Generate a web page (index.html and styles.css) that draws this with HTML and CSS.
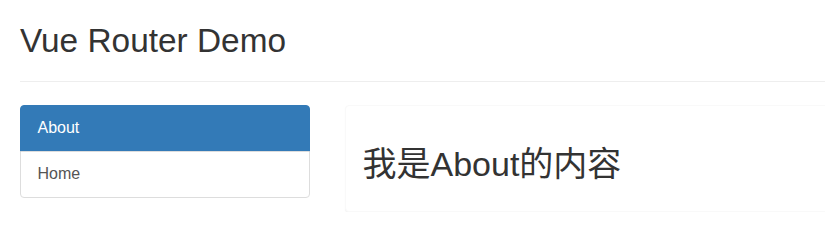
FILE: index.html
```html
<!DOCTYPE html>
<html lang="zh-CN">
<head>
<meta charset="utf-8">
<title>Vue Router Demo</title>
<link rel="stylesheet" href="styles.css">
</head>
<body>
<div class="page">
  <div class="page-header">
    <h2 class="title">Vue Router Demo</h2>
  </div>
  <div class="row">
    <div class="list-group">
      <a class="list-group-item active" href="#about">About</a>
      <a class="list-group-item" href="#home">Home</a>
    </div>
    <div class="panel">
      <div class="panel-body">
        <h2 class="content-title">我是About的内容</h2>
      </div>
    </div>
  </div>
</div>
</body>
</html>
```
FILE: styles.css
```css
html, body {
  margin: 0;
  padding: 0;
  overflow: hidden;
  background: #fff;
}
body {
  font-family: "Liberation Sans", Arial, "Noto Sans CJK SC", sans-serif;
  color: #333;
}
.page {
  padding-left: 20px;
}
.page-header {
  margin-right: -60px;
  padding-bottom: 10px;
  border-bottom: 1px solid #eee;
}
.title {
  margin: 23px 0 11px;
  font-size: 33.4px;
  line-height: 36.7px;
  font-weight: 400;
  color: #333;
}
.row {
  display: flex;
  align-items: flex-start;
  gap: 35px;
  margin-top: 23px;
  margin-right: -60px;
}
.list-group {
  width: 290px;
  flex: none;
  display: flex;
  flex-direction: column;
}
.list-group-item {
  display: block;
  padding: 11.5px 16.5px;
  margin-bottom: -1px;
  font-size: 16px;
  line-height: 22px;
  color: #555;
  text-decoration: none;
  background: #fff;
  border: 1px solid #ddd;
}
.list-group-item:first-child {
  border-top-left-radius: 4px;
  border-top-right-radius: 4px;
}
.list-group-item:last-child {
  margin-bottom: 0;
  border-bottom-left-radius: 4px;
  border-bottom-right-radius: 4px;
}
.list-group-item.active {
  color: #fff;
  background: #337ab7;
  border-color: #337ab7;
}
.panel {
  flex: 1;
  background: #fff;
  border: 1px solid #f9f9f9;
  border-radius: 4px;
  box-shadow: 0 1px 1px rgba(0, 0, 0, 0.05);
}
.panel-body {
  padding: 16.5px;
}
.content-title {
  margin: 24px 0 10.6px;
  font-size: 34px;
  line-height: 37.4px;
  font-weight: 400;
  color: #333;
}
```
